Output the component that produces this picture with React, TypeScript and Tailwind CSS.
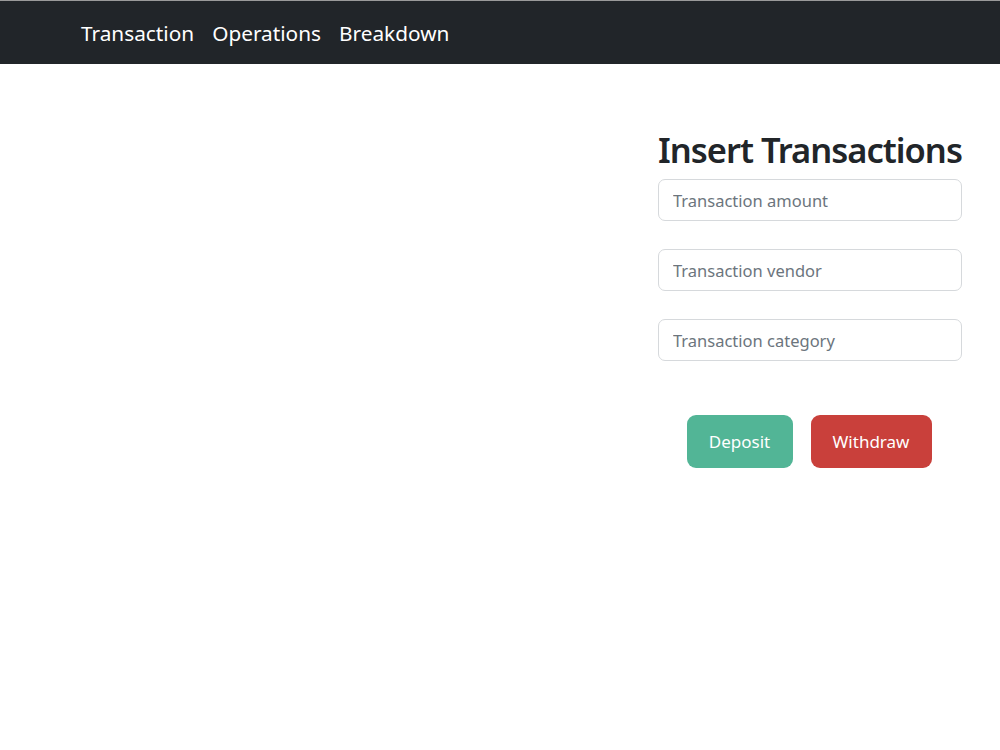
import React from "react";

export default function App() {
  return (
    <div className="min-h-[750px] w-[1000px] bg-white font-['Noto_Sans',sans-serif]">
      <nav className="flex h-[64px] items-center gap-[18px] border-t border-[#9a9a9a] bg-[#212529] pl-[81px] pt-[3px] text-[20.8px] text-white">
        <span>Transaction</span>
        <span>Operations</span>
        <span>Breakdown</span>
      </nav>
      <div className="flex justify-end pr-[38px] pt-[62px]">
        <div className="flex w-[304px] flex-col">
          <h1 className="whitespace-nowrap text-[34.5px] font-semibold leading-[48px] tracking-[-1px] text-[#212529]">Insert Transactions</h1>
          <div className="mt-[5px] flex flex-col gap-[28px]">
            <input
              className="h-[42px] w-full rounded-[7px] border border-[#d6d9dc] px-[14px] text-[16.5px] text-[#212529] placeholder:text-[#6c757d] outline-none"
              placeholder="Transaction amount"
            />
            <input
              className="h-[42px] w-full rounded-[7px] border border-[#d6d9dc] px-[14px] text-[16.5px] text-[#212529] placeholder:text-[#6c757d] outline-none"
              placeholder="Transaction vendor"
            />
            <input
              className="h-[42px] w-full rounded-[7px] border border-[#d6d9dc] px-[14px] text-[16.5px] text-[#212529] placeholder:text-[#6c757d] outline-none"
              placeholder="Transaction category"
            />
          </div>
          <div className="mt-[54px] flex justify-center gap-[18px] pr-[2px]">
            <button className="h-[53px] w-[106px] rounded-[9px] bg-[#52b596] text-[17px] text-white">Deposit</button>
            <button className="h-[53px] w-[121px] rounded-[9px] bg-[#c9403b] text-[17px] text-white">Withdraw</button>
          </div>
        </div>
      </div>
    </div>
  );
}
